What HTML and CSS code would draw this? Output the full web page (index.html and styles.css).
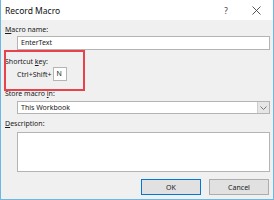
FILE: index.html
```html
<!DOCTYPE html>
<html lang="en">
<head>
    <meta charset="UTF-8">
    <title>Record Macro</title>
    <link rel="stylesheet" href="styles.css">
</head>
<body>
    <div class="window">
        <div class="titlebar">
            <span class="title">Record Macro</span>
            <span class="help">?</span>
            <span class="close">
                <svg width="9" height="9" viewBox="0 0 9 9"><path d="M0.5 0.5L8.5 8.5M8.5 0.5L0.5 8.5" stroke="#444" stroke-width="0.9"/></svg>
            </span>
        </div>

        <div class="content">
            <div class="lbl"><u>M</u>acro name:</div>
            <div class="field">EnterText</div>

            <div class="lbl lbl-shortcut">Shortcut <u>k</u>ey:</div>
            <div class="shortcut">
                <span>Ctrl+Shift+</span>
                <span class="keybox">N</span>
            </div>

            <div class="lbl lbl-store">Store macro <u>i</u>n:</div>
            <div class="select">
                <span class="select-text">This Workbook</span>
                <span class="arrow">
                    <svg width="7" height="4" viewBox="0 0 7 4"><path d="M0.5 0.5L3.5 3.5L6.5 0.5" fill="none" stroke="#777" stroke-width="1"/></svg>
                </span>
            </div>

            <div class="lbl lbl-desc"><u>D</u>escription:</div>
            <div class="textarea"></div>

            <div class="buttons">
                <button class="btn btn-ok">OK</button>
                <button class="btn">Cancel</button>
            </div>
        </div>

        <div class="highlight"></div>
    </div>
</body>
</html>
```

FILE: styles.css
```css
body {
    margin: 0;
    font-family: "Noto Sans", "Open Sans", sans-serif;
    font-size: 7px;
    color: #1a1a1a;
}
.window {
    position: relative;
    width: 272px;
    height: 199px;
    border: 1px solid #6cb8e2;
    border-top: none;
    background-color: #f0f0f0;
}
.titlebar {
    height: 20px;
    background-color: #fff;
    display: flex;
    align-items: center;
    padding-left: 4px;
}
.title {
    flex: 1;
    font-size: 8.5px;
    color: #111;
}
.help {
    width: 30px;
    text-align: center;
    font-size: 8px;
    color: #333;
}
.close {
    width: 30px;
    display: flex;
    justify-content: center;
    margin-right: 2px;
}
.content {
    padding: 4px 3px 0 4px;
}
.lbl {
    height: 12px;
    line-height: 12px;
}
.lbl u {
    text-underline-offset: 1px;
}
.field {
    margin-left: 12px;
    height: 12px;
    line-height: 12px;
    border: 1px solid #b4b4b4;
    background-color: #fff;
    padding: 0 3px;
}
.lbl-shortcut {
    margin-top: 6px;
    height: 11px;
}
.shortcut {
    display: flex;
    align-items: center;
    margin-left: 12px;
    gap: 1px;
}
.keybox {
    width: 14px;
    height: 14px;
    line-height: 12px;
    border: 1px solid #b4b4b4;
    background-color: #fff;
    padding-left: 3px;
    box-sizing: border-box;
}
.lbl-store {
    margin-top: 8px;
    height: 12px;
    line-height: 10px;
}
.select {
    margin-left: 12px;
    height: 11px;
    border: 1px solid #b4b4b4;
    background-color: #fff;
    display: flex;
    align-items: center;
}
.select-text {
    flex: 1;
    padding-left: 3px;
}
.arrow {
    width: 11px;
    height: 11px;
    background-color: #e6e6e6;
    border-left: 1px solid #cfcfcf;
    display: flex;
    align-items: center;
    justify-content: center;
}
.lbl-desc {
    margin-top: 4px;
}
.textarea {
    margin: 2px 0 0 12px;
    height: 38px;
    border: 1px solid #b4b4b4;
    background-color: #fff;
}
.buttons {
    display: flex;
    justify-content: flex-end;
    gap: 8px;
    margin: 7px 1px 0 0;
}
.btn {
    width: 60px;
    height: 16px;
    font-family: inherit;
    font-size: 7px;
    background-color: #e1e1e1;
    border: 1px solid #adadad;
    padding: 0;
    color: #1a1a1a;
}
.btn-ok {
    border-color: #0078d7;
}
.highlight {
    position: absolute;
    left: 3px;
    top: 50px;
    width: 77px;
    height: 37px;
    border: 2px solid #e8434b;
}
```
